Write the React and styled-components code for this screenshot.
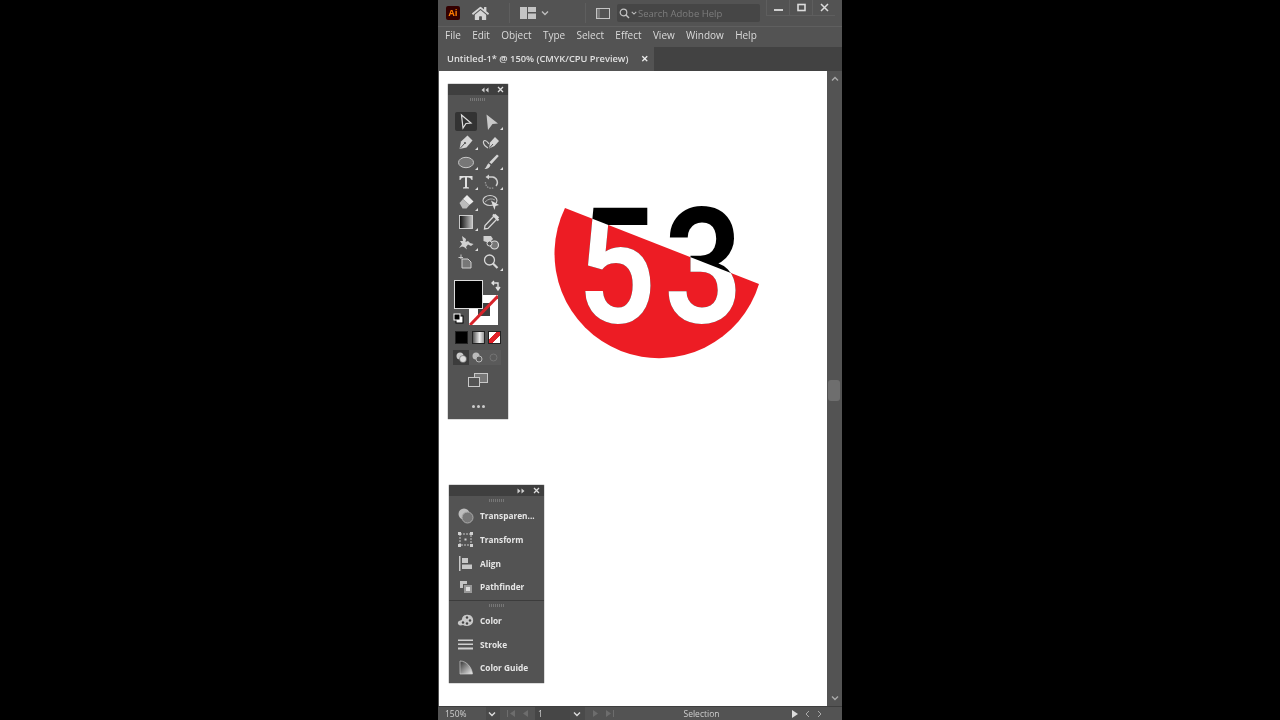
import styled, { createGlobalStyle } from "styled-components";
import { FaHome } from "react-icons/fa";

const GlobalStyle = createGlobalStyle`
  html, body { margin: 0; padding: 0; background: #000; }
  body { font-family: "Open Sans", "Noto Sans", sans-serif; overflow: hidden; }
`;

const Page = styled.div`
  width: 1280px;
  height: 720px;
  display: flex;
  justify-content: center;
  background: #000;
`;

const Window = styled.div`
  width: 404px;
  height: 720px;
  display: flex;
  flex-direction: column;
  background: #535353;
  color: #dcdcdc;
  filter: blur(0.3px);
`;

const TitleBar = styled.div`
  height: 27px;
  flex: none;
  display: flex;
  align-items: center;
  padding-left: 8px;
  box-sizing: border-box;
  border-bottom: 1px solid #5f5f5f;
`;

const AiLogo = styled.div`
  width: 14px;
  height: 14px;
  background: #330000;
  border-radius: 2px;
  color: #ff7c00;
  font: 700 9px/14px "Open Sans", sans-serif;
  text-align: center;
  margin-right: 12px;
`;

const Sep = styled.div`
  width: 1px;
  height: 20px;
  background: #5e5e5e;
  margin: 0 ${(p) => p.$r}px 0 ${(p) => p.$l}px;
`;

const SearchBox = styled.div`
  width: 143px;
  height: 18px;
  margin-left: 7px;
  background: #464646;
  border-radius: 2px;
  display: flex;
  align-items: center;
  padding-left: 2px;
  box-sizing: border-box;
  font-size: 9.5px;
  color: #7d7d7d;
  gap: 1px;
`;

const WinControls = styled.div`
  margin-left: 6px;
  align-self: flex-start;
  display: flex;
`;

const WinButton = styled.div`
  width: 23px;
  height: 16px;
  display: flex;
  align-items: center;
  justify-content: center;
  border-left: 1px solid #5e5e5e;
  border-bottom: 1px solid #5e5e5e;
  box-sizing: border-box;
`;

const MenuBar = styled.div`
  height: 20px;
  flex: none;
  display: flex;
  align-items: flex-start;
  padding: 1px 0 0 7px;
  box-sizing: border-box;
  gap: 11.3px;
  font-size: 10px;
  line-height: 14px;
  color: #dadada;
`;

const TabBar = styled.div`
  height: 24px;
  flex: none;
  display: flex;
  background: #424242;
`;

const Tab = styled.div`
  width: 216px;
  display: flex;
  align-items: flex-start;
  padding-top: 5px;
  background: #535353;
  padding-left: 9px;
  box-sizing: border-box;
  font-size: 9.3px;
  line-height: 13px;
  font-weight: 600;
  color: #e0e0e0;
  white-space: nowrap;
`;

const TabClose = styled.span`
  margin-left: 13px;
  font-size: 9px;
  font-weight: 700;
  color: #eee;
`;

const Main = styled.div`
  flex: 1;
  display: flex;
  min-height: 0;
  padding-left: 1px;
`;

const Canvas = styled.div`
  flex: 1;
  position: relative;
  background: #fff;
  overflow: hidden;
`;

const Scrollbar = styled.div`
  width: 15px;
  display: flex;
  flex-direction: column;
  align-items: center;
  justify-content: space-between;
  padding: 4px 0;
  box-sizing: border-box;
  position: relative;
`;

const Thumb = styled.div`
  position: absolute;
  top: 309px;
  left: 1px;
  width: 12px;
  height: 21px;
  border-radius: 3px;
  background: #6e6e6e;
`;

const StatusBar = styled.div`
  height: 14px;
  flex: none;
  display: flex;
  align-items: center;
  font-size: 8.5px;
  color: #cfcfcf;
  padding-left: 7px;
  box-sizing: border-box;
  border-top: 1px solid #3e3e3e;
`;

const StatusField = styled.div`
  width: ${(p) => p.$w}px;
  flex: none;
  display: flex;
  align-items: center;
  justify-content: ${(p) => (p.$center ? "center" : "flex-start")};
  gap: ${(p) => p.$gap || 0}px;
  padding-left: ${(p) => p.$pad || 0}px;
  box-sizing: border-box;
  height: 100%;
  background: ${(p) => p.$bg || "transparent"};
`;

const Artwork = styled.svg`
  position: absolute;
  left: 106px;
  top: 129px;
`;

const FloatPanel = styled.div`
  position: absolute;
  left: ${(p) => p.$x}px;
  top: ${(p) => p.$y}px;
  width: ${(p) => p.$w}px;
  height: ${(p) => p.$h}px;
  background: #535353;
  box-shadow: 0 0 1px #333;
  display: flex;
  flex-direction: column;
`;

const PanelHeader = styled.div`
  height: 11px;
  flex: none;
  background: #3f3f3f;
  display: flex;
  align-items: center;
  justify-content: flex-end;
  gap: 8px;
  padding-right: 4px;
  border-radius: 2px 2px 0 0;
`;

const Grip = styled.div`
  width: 16px;
  height: 3px;
  margin: 3px auto 0;
  flex: none;
  background: repeating-linear-gradient(90deg, #777 0 1px, transparent 1px 2px);
`;

const ToolGrid = styled.div`
  display: grid;
  grid-template-columns: 25px 25px;
  grid-auto-rows: 20.15px;
  margin: 11px 0 0 7px;
`;

const ToolCell = styled.div`
  position: relative;
  width: 22px;
  height: 19px;
  display: flex;
  align-items: center;
  justify-content: center;
  border-radius: 2px;
  background: ${(p) => (p.$active ? "#333" : "transparent")};
`;

const Flag = styled.i`
  position: absolute;
  right: -1px;
  bottom: 1px;
  border-left: 3px solid transparent;
  border-bottom: 3px solid #ddd;
`;

const ColorWell = styled.div`
  position: relative;
  height: 48px;
  margin: 7px 0 0 6px;
`;

const FillSwatch = styled.div`
  position: absolute;
  left: 0;
  top: 0;
  width: 27px;
  height: 27px;
  background: #000;
  border: 1px solid #ddd;
  z-index: 2;
`;

const StrokeSwatch = styled.svg`
  position: absolute;
  left: 15px;
  top: 15px;
`;

const SmallSvg = styled.svg`
  position: absolute;
  left: ${(p) => p.$x}px;
  top: ${(p) => p.$y}px;
`;

const SwatchRow = styled.div`
  display: flex;
  gap: 3.5px;
  margin: 3px 0 0 7px;
`;

const MiniSwatch = styled.div`
  width: 11px;
  height: 11px;
  border: 1px solid #222;
  background: ${(p) => p.$bg};
`;

const ModeRow = styled.div`
  display: flex;
  margin: 6px 0 0 5px;
`;

const ModeCell = styled.div`
  width: 16px;
  height: 15px;
  display: flex;
  align-items: center;
  justify-content: center;
  background: ${(p) => (p.$active ? "#3c3c3c" : "#5a5a5a")};
`;

const CenterIcon = styled.div`
  display: flex;
  justify-content: center;
  margin-top: ${(p) => p.$mt}px;
`;

const Dots = styled.div`
  display: flex;
  justify-content: center;
  gap: 2px;
  margin-top: 18px;
`;

const Dot = styled.i`
  width: 3px;
  height: 3px;
  border-radius: 50%;
  background: #ccc;
`;

const PanelGroup = styled.div`
  display: flex;
  flex-direction: column;
  padding: ${(p) => p.$pad};
`;

const PanelRow = styled.div`
  height: 23.7px;
  display: flex;
  align-items: center;
  padding-left: 8px;
  gap: 6px;
  font-size: 8.3px;
  font-weight: 700;
  color: #e6e6e6;
  white-space: nowrap;
`;

const RowIcon = styled.div`
  width: 17px;
  height: 17px;
  display: flex;
  align-items: center;
  justify-content: center;
`;

const Divider = styled.div`
  height: 1px;
  background: #3c3c3c;
`;

const Chevron = ({ c = "#bdbdbd", up, size = 8 }) => (
  <svg width={size} height={size} viewBox="0 0 8 8">
    <path d={up ? "M1 5.5 L4 2.5 L7 5.5" : "M1 2.5 L4 5.5 L7 2.5"} fill="none" stroke={c} strokeWidth="1.4" />
  </svg>
);

const DoubleArrow = ({ left }) => (
  <svg width="8" height="6" viewBox="0 0 8 6">
    <path d={left ? "M3.500 0.500V5.500L0.500 3Z M7.500 0.500V5.500L4.500 3Z" : "M0.500 0.500V5.500L3.500 3Z M4.500 0.500V5.500L7.500 3Z"} fill="#cfcfcf" />
  </svg>
);

const CloseX = () => (
  <svg width="7" height="7" viewBox="0 0 7 7">
    <path d="M1 1L6 6M6 1L1 6" stroke="#ddd" strokeWidth="1.3" />
  </svg>
);

const Ico = ({ children, s = 18 }) => (
  <svg width={s} height={s} viewBox="0 0 18 18">{children}</svg>
);

const nib = "M2.500 16 L4 8.500 L10.500 2.500 L15.500 7.500 L9.500 14.500 Z";

const tools = [
  { active: true, el: <path d="M4.500 2 L14 10 L9 10.500 L6 15 Z" fill="none" stroke="#e0e0e0" strokeWidth="1.2" /> },
  { flag: true, el: <path d="M4.500 1.500 L16 10.500 L10.500 11 L6 17 Z" fill="#c9c9c9" /> },
  { flag: true, el: <g><path d={nib} fill="#d4d4d4" /><path d="M3 15.500 L8 10" stroke="#535353" strokeWidth="1" /><circle cx="8" cy="10" r="1.100" fill="#535353" /></g> },
  { el: <g><path d="M7 15.500 L8 9.500 L13 4 L17 8 L12.500 13 Z" fill="#d4d4d4" /><path d="M7.500 15 L11 11" stroke="#535353" /><path d="M7 11 C3.500 6 1 7 1.500 10 C2 13 4 14 6 15" fill="none" stroke="#d0d0d0" strokeWidth="1.200" /></g> },
  { flag: true, el: <ellipse cx="9" cy="9.500" rx="7.500" ry="5.200" fill="#777" stroke="#c8c8c8" strokeWidth="1" /> },
  { flag: true, el: <path d="M15 1.500 L16.800 3 L9.500 11 L7.300 9.300 Z M6.500 10.300 L8.500 12 C8 15 4.500 16.500 2.500 16 C4.500 14.500 4.500 12 6.500 10.300 Z" fill="#d4d4d4" /> },
  { flag: true, el: <path d="M2.500 3 H15.500 V7 H14.500 Q14 4.500 11 4.500 H10 V14 L12 14.600 V15.500 H6 V14.600 L8 14 V4.500 H7 Q4 4.500 3.500 7 H2.500 Z" fill="#e0e0e0" /> },
  { flag: true, el: <g><path d="M6 4 H10.500 A5.400 5.400 0 0 1 14 13" fill="none" stroke="#d0d0d0" strokeWidth="1.400" /><path d="M3.500 9 A5.700 5.700 0 0 0 12 14.500" fill="none" stroke="#999" strokeWidth="1.300" strokeDasharray="1.500 1" /><path d="M7 1.500 L7 6.500 L3.500 4 Z" fill="#d0d0d0" /></g> },
  { flag: true, el: <g><path d="M10 2 L16.500 8.500 L12.500 12 L6 6 Z" fill="#e8e8e8" /><path d="M6 6 L12.500 12 L9.500 15.500 L5.500 15.500 L2.500 10 Z" fill="#bcbcbc" /></g> },
  { el: <g><ellipse cx="8" cy="7.500" rx="7" ry="5" fill="none" stroke="#d0d0d0" strokeWidth="1.100" /><path d="M3 9 Q8 4 13 7" fill="none" stroke="#aaa" /><path d="M9 7.500 L17 12 L13.500 13 L12.500 17 Z" fill="#dcdcdc" /></g> },
  { flag: true, el: <g><defs><linearGradient id="grd" x1="0" y1="0" x2="1" y2="0"><stop offset="0" stopColor="#0a0a0a" /><stop offset="1" stopColor="#c8c8c8" /></linearGradient></defs><rect x="2.500" y="2.500" width="13" height="13" fill="url(#grd)" stroke="#d8d8d8" strokeWidth="0.900" /></g> },
  { el: <g><path d="M12 3 L15 6 L6 15.500 L2.500 16 L3 12.500 Z" fill="none" stroke="#d8d8d8" strokeWidth="1.300" /><path d="M11 1.500 L16.500 7.500 M12.500 1.500 L16.500 5" stroke="#d8d8d8" strokeWidth="2" /></g> },
  { flag: true, el: <path d="M2 15 L5 11 L3 8 L6 8 L5 3 L9 6 L8.500 9 L11 8 L13 10 L16.500 11 L14 13 L11 11.500 L9 14 L10 16.500 L7 14 L5 13.500 Z" fill="#d0d0d0" /> },
  { el: <g><path d="M1.500 3 L9 3 L11 6 L7 10 L1.500 8 Z" fill="#d0d0d0" /><circle cx="12.500" cy="12" r="4" fill="#777" stroke="#ddd" strokeWidth="1.200" /><circle cx="7.500" cy="10.500" r="2.500" fill="#535353" stroke="#ddd" /></g> },
  { el: <g><path d="M4 1.500 V6 M1.500 4.500 H6" stroke="#c8c8c8" /><path d="M5 6 H11 L14 9 V15 H5 Z" fill="#777" stroke="#d0d0d0" /></g> },
  { flag: true, el: <g><circle cx="7.500" cy="7" r="5" fill="none" stroke="#d8d8d8" strokeWidth="1.300" /><path d="M11 10.500 L15.500 15" stroke="#d8d8d8" strokeWidth="2.200" /></g> },
];

const CUT = "M565 208 L759 284 A104.500 104.500 0 1 1 565 208 Z";

const Digits = ({ fill }) => (
  <g fontFamily="Roboto, sans-serif" fontSize="162" fontWeight="600" fill={fill}>
    <text transform="translate(577.500 322) scale(0.85 1)">5</text>
    <text transform="translate(664 322) scale(0.85 1)">3</text>
  </g>
);

export default function App() {
  return (
    <Page>
      <GlobalStyle />
      <Window>
        <TitleBar>
          <AiLogo>Ai</AiLogo>
          <FaHome size={17} color="#d4d4d4" />
          <Sep $l={20} $r={10} />
          <svg width="16" height="12" viewBox="0 0 16 12"><path d="M0 0H7V12H0Z M8 0H16V5H8Z M8 6.500H16V12H8Z" fill="#c4c4c4" /></svg>
          <span style={{ width: 5 }} />
          <Chevron />
          <Sep $l={36} $r={10} />
          <svg width="14" height="11" viewBox="0 0 14 11"><rect x="0.500" y="0.500" width="13" height="10" fill="none" stroke="#c4c4c4" /><rect x="1" y="1" width="3" height="9" fill="#777" /></svg>
          <SearchBox>
            <svg width="11" height="11" viewBox="0 0 11 11"><circle cx="4.500" cy="4.500" r="3.300" fill="none" stroke="#c4c4c4" strokeWidth="1.200" /><path d="M7 7 L10 10" stroke="#c4c4c4" strokeWidth="1.400" /></svg>
            <Chevron size={6} />
            <span>Search Adobe Help</span>
          </SearchBox>
          <WinControls>
            <WinButton><svg width="9" height="9" viewBox="0 0 9 9"><path d="M0 7H9" stroke="#cfcfcf" strokeWidth="2" /></svg></WinButton>
            <WinButton><svg width="9" height="9" viewBox="0 0 9 9"><rect x="1" y="1.500" width="7" height="6" fill="none" stroke="#dcdcdc" strokeWidth="1.600" /></svg></WinButton>
            <WinButton><svg width="9" height="9" viewBox="0 0 9 9"><path d="M1 1L8 8M8 1L1 8" stroke="#dcdcdc" strokeWidth="1.500" /></svg></WinButton>
          </WinControls>
        </TitleBar>
        <MenuBar>
          {["File", "Edit", "Object", "Type", "Select", "Effect", "View", "Window", "Help"].map((m) => (
            <span key={m}>{m}</span>
          ))}
        </MenuBar>
        <TabBar>
          <Tab>
            Untitled-1* @ 150% (CMYK/CPU Preview)
            <TabClose>✕</TabClose>
          </Tab>
        </TabBar>
        <Main>
          <Canvas>
            <Artwork width="225" height="170" viewBox="545 200 225 170">
              <defs>
                <clipPath id="cut">
                  <path d={CUT} />
                </clipPath>
              </defs>
              <path d={CUT} fill="#ed1c24" />
              <Digits fill="#000" />
              <g clipPath="url(#cut)">
                <Digits fill="#fff" />
              </g>
            </Artwork>

            <FloatPanel $x={9} $y={13} $w={60} $h={335}>
              <PanelHeader>
                <DoubleArrow left />
                <CloseX />
              </PanelHeader>
              <Grip />
              <ToolGrid>
                {tools.map((t, i) => (
                  <ToolCell key={i} $active={t.active}>
                    <Ico>{t.el}</Ico>
                    {t.flag && <Flag />}
                  </ToolCell>
                ))}
              </ToolGrid>
              <ColorWell>
                <FillSwatch />
                <StrokeSwatch width="29" height="30" viewBox="0 0 29 30">
                  <rect width="29" height="30" fill="#fff" />
                  <rect x="9" y="8" width="12" height="13" fill="#3f3f3f" />
                  <path d="M1 30 L29 1" stroke="#d8232a" strokeWidth="3" />
                </StrokeSwatch>
                <SmallSvg $x={36} $y={0} width="12" height="12" viewBox="0 0 12 12">
                  <path d="M2 3 H8 V9 M6 7 L8 10 L10 7 M4 1 L2 3 L4 5" fill="none" stroke="#e0e0e0" strokeWidth="1.400" />
                </SmallSvg>
                <SmallSvg $x={-1} $y={33} width="11" height="11" viewBox="0 0 11 11">
                  <rect x="3" y="3" width="7" height="7" fill="#fff" stroke="#000" />
                  <rect x="1" y="1" width="6" height="6" fill="#000" stroke="#fff" />
                </SmallSvg>
              </ColorWell>
              <SwatchRow>
                <MiniSwatch $bg="#000" />
                <MiniSwatch $bg="linear-gradient(90deg,#555,#eee 60%,#999)" />
                <MiniSwatch $bg="linear-gradient(135deg,#fff 35%,#e02028 35% 65%,#fff 65%)" />
              </SwatchRow>
              <ModeRow>
                <ModeCell $active>
                  <svg width="11" height="11" viewBox="0 0 11 11"><circle cx="4" cy="4" r="3.500" fill="#ccc" /><circle cx="7" cy="7" r="3.500" fill="#ddd" stroke="#555" strokeWidth="0.600" /></svg>
                </ModeCell>
                <ModeCell>
                  <svg width="11" height="11" viewBox="0 0 11 11"><circle cx="4" cy="4" r="3.500" fill="#bbb" /><circle cx="7" cy="7" r="3" fill="#5a5a5a" stroke="#bbb" /></svg>
                </ModeCell>
                <ModeCell>
                  <svg width="11" height="11" viewBox="0 0 11 11"><circle cx="5.500" cy="5.500" r="3.500" fill="none" stroke="#747474" /></svg>
                </ModeCell>
              </ModeRow>
              <CenterIcon $mt={8}>
                <svg width="20" height="14" viewBox="0 0 20 14"><rect x="6.500" y="0.500" width="13" height="9" fill="#777" stroke="#c8c8c8" /><rect x="0.500" y="4.500" width="11" height="9" fill="#535353" stroke="#c8c8c8" /></svg>
              </CenterIcon>
              <Dots><Dot /><Dot /><Dot /></Dots>
            </FloatPanel>

            <FloatPanel $x={10} $y={414} $w={95} $h={198}>
              <PanelHeader>
                <DoubleArrow />
                <CloseX />
              </PanelHeader>
              <Grip />
              <PanelGroup $pad="2px 0 1px">
                <PanelRow>
                  <RowIcon><svg width="16" height="16" viewBox="0 0 16 16"><circle cx="6" cy="6" r="5.500" fill="#bdbdbd" /><circle cx="9.500" cy="9.500" r="5.500" fill="#777" stroke="#aaa" /></svg></RowIcon>
                  Transparen...
                </PanelRow>
                <PanelRow>
                  <RowIcon><svg width="15" height="15" viewBox="0 0 15 15"><rect x="2" y="2" width="11" height="11" fill="none" stroke="#c8c8c8" strokeDasharray="2 1" /><path d="M0 0h3v3H0z M12 0h3v3h-3z M0 12h3v3H0z M12 12h3v3h-3z M6.500 6.500h2v2h-2z" fill="#d0d0d0" /></svg></RowIcon>
                  Transform
                </PanelRow>
                <PanelRow>
                  <RowIcon><svg width="15" height="15" viewBox="0 0 15 15"><path d="M1 0h1.500v15H1z M4 2h6v5H4z M4 8.500h10V13H4z" fill="#c8c8c8" /></svg></RowIcon>
                  Align
                </PanelRow>
                <PanelRow>
                  <RowIcon><svg width="14" height="14" viewBox="0 0 14 14"><path d="M1 1h7v3H4v4H1z" fill="#c4c4c4" /><path d="M5 5h8v8H5z" fill="#999" /><path d="M7 7h4v4H7z" fill="#ddd" /></svg></RowIcon>
                  Pathfinder
                </PanelRow>
              </PanelGroup>
              <Divider />
              <Grip />
              <PanelGroup $pad="2px 0 0">
                <PanelRow>
                  <RowIcon><svg width="17" height="14" viewBox="0 0 17 14"><path d="M9 1 C14 0 17 4 16 8 C15 12 9 13 6 11 C3 12 0 11 1 8 C2 6 5 7 5 5 C5 3 7 1 9 1 Z" fill="#c8c8c8" /><circle cx="6" cy="8.500" r="1.200" fill="#444" /><circle cx="10" cy="9.500" r="1.200" fill="#444" /><circle cx="13" cy="6.500" r="1.200" fill="#444" /><circle cx="10" cy="3.500" r="1.200" fill="#444" /></svg></RowIcon>
                  Color
                </PanelRow>
                <PanelRow>
                  <RowIcon><svg width="15" height="11" viewBox="0 0 15 11"><path d="M0 0.500h15v1.500H0z M0 4.500h15v1.500H0z M0 8.500h15v2H0z" fill="#d0d0d0" /></svg></RowIcon>
                  Stroke
                </PanelRow>
                <PanelRow>
                  <RowIcon><svg width="14" height="15" viewBox="0 0 14 15"><defs><linearGradient id="guide" x1="0" x2="1" y1="0" y2="1"><stop offset="0" stopColor="#333" /><stop offset="1" stopColor="#eee" /></linearGradient></defs><path d="M1 1 C8 1 13 8 13.500 14 H1 Z" fill="url(#guide)" stroke="#ccc" strokeWidth="0.700" /></svg></RowIcon>
                  Color Guide
                </PanelRow>
              </PanelGroup>
            </FloatPanel>
          </Canvas>
          <Scrollbar>
            <Chevron up c="#aaa" />
            <Thumb />
            <Chevron c="#aaa" />
          </Scrollbar>
        </Main>
        <StatusBar>
          <StatusField $w={41}>150%</StatusField>
          <StatusField $w={14} $pad={2} $bg="#4a4a4a"><Chevron c="#ddd" /></StatusField>
          <StatusField $w={35} $pad={7} $gap={8}>
            <svg width="8" height="7" viewBox="0 0 8 7"><path d="M0 0h1v7H0z M8 0v7L3 3.500z" fill="#6d6d6d" /></svg>
            <svg width="6" height="7" viewBox="0 0 6 7"><path d="M5 0v7L0 3.500z" fill="#6d6d6d" /></svg>
          </StatusField>
          <StatusField $w={35} $pad={3} $bg="#464646">1</StatusField>
          <StatusField $w={15} $pad={3} $bg="#4a4a4a"><Chevron c="#ddd" /></StatusField>
          <StatusField $w={33} $pad={7} $gap={8}>
            <svg width="6" height="7" viewBox="0 0 6 7"><path d="M1 0v7L6 3.500z" fill="#6d6d6d" /></svg>
            <svg width="8" height="7" viewBox="0 0 8 7"><path d="M0 0v7L5 3.500z M7 0h1v7H7z" fill="#6d6d6d" /></svg>
          </StatusField>
          <StatusField $w={167} $center>Selection</StatusField>
          <StatusField $w={38} $pad={7} $gap={7}>
            <svg width="6" height="8" viewBox="0 0 6 8"><path d="M0 0v8L6 4z" fill="#ddd" /></svg>
            <svg width="5" height="8" viewBox="0 0 5 8"><path d="M4 1L1 4l3 3" fill="none" stroke="#aaa" /></svg>
            <svg width="5" height="8" viewBox="0 0 5 8"><path d="M1 1l3 3-3 3" fill="none" stroke="#aaa" /></svg>
          </StatusField>
        </StatusBar>
      </Window>
    </Page>
  );
}
